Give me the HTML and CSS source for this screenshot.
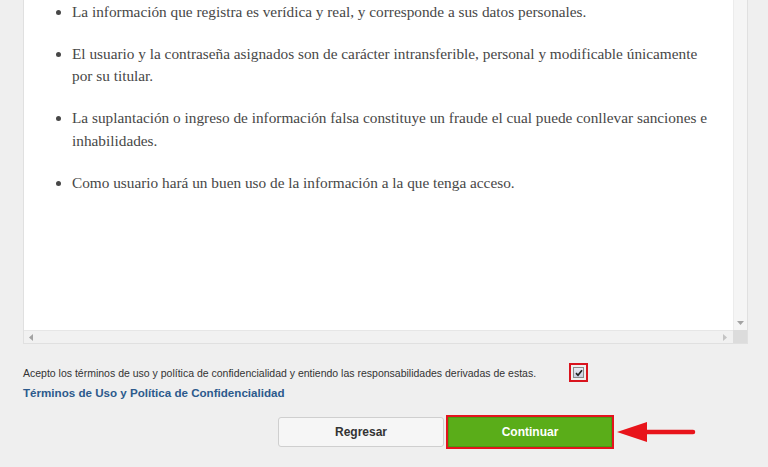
FILE: index.html
```html
<!DOCTYPE html>
<html lang="es">
<head>
<meta charset="utf-8">
<title>Términos de uso</title>
<link rel="stylesheet" href="styles.css">
</head>
<body>
<div class="page">
  <div class="terms-box">
    <div class="terms-content">
      <ul class="terms-list">
        <li>La información que registra es verídica y real, y corresponde a sus datos personales.</li>
        <li>El usuario y la contraseña asignados son de carácter intransferible, personal y modificable únicamente por su titular.</li>
        <li>La suplantación o ingreso de información falsa constituye un fraude el cual puede conllevar sanciones e inhabilidades.</li>
        <li>Como usuario hará un buen uso de la información a la que tenga acceso.</li>
      </ul>
    </div>
    <div class="vscroll">
      <svg class="arrow-down" width="7" height="4" viewBox="0 0 7 4"><path d="M0 0H7L3.5 4Z" fill="#a3a3a3"/></svg>
    </div>
    <div class="hscroll">
      <svg width="4" height="7" viewBox="0 0 4 7"><path d="M4 0V7L0 3.5Z" fill="#a3a3a3"/></svg>
      <svg width="4" height="7" viewBox="0 0 4 7"><path d="M0 0V7L4 3.5Z" fill="#c4c4c4"/></svg>
    </div>
    <div class="corner"></div>
  </div>

  <div class="agree-row">
    <span class="agree-text">Acepto los términos de uso y política de confidencialidad y entiendo las responsabilidades derivadas de estas.</span>
    <span class="check-highlight">
      <span class="checkbox">
        <svg width="8" height="8" viewBox="0 0 8 8"><path d="M1 4.2L3 6.3L7 1.2" fill="none" stroke="#222" stroke-width="1.7"/></svg>
      </span>
    </span>
  </div>

  <a class="terms-link" href="#">Términos de Uso y Política de Confidencialidad</a>

  <div class="actions">
    <button class="btn btn-back" type="button">Regresar</button>
    <button class="btn btn-continue" type="button">Continuar</button>
    <svg class="pointer-arrow" width="80" height="22" viewBox="0 0 80 22">
      <path d="M0 11L30 1V21Z" fill="#e8141b"/>
      <line x1="26" y1="11" x2="76" y2="11" stroke="#e8141b" stroke-width="4.5" stroke-linecap="round"/>
    </svg>
  </div>
</div>
</body>
</html>
```

FILE: styles.css
```css
html, body {
  margin: 0;
  padding: 0;
  background: #efefef;
}

.page {
  width: 768px;
  height: 467px;
  overflow: hidden;
  padding: 0 20px 0 23px;
  box-sizing: border-box;
  font-family: "Liberation Sans", Arial, sans-serif;
}

.terms-box {
  width: 725px;
  height: 344px;
  box-sizing: border-box;
  background: #fff;
  border: 1px solid #e0e0e0;
  border-top: none;
  display: grid;
  grid-template-columns: 1fr 14px;
  grid-template-rows: 1fr 13px;
}

.terms-content {
  overflow: hidden;
  padding: 1px 0 0 8px;
}

.terms-list {
  margin: 0;
  padding-left: 40px;
  max-width: 642px;
  font-family: "Liberation Serif", Georgia, serif;
  font-size: 15.3px;
  line-height: 22.7px;
  color: #474747;
}

.terms-list li {
  margin-bottom: 19px;
}

.vscroll {
  background: #f5f5f5;
  border-left: 1px solid #ececec;
  display: flex;
  align-items: flex-end;
  justify-content: center;
  padding-bottom: 5px;
}

.hscroll {
  background: #f1f1f1;
  border-top: 1px solid #e6e6e6;
  display: flex;
  align-items: center;
  justify-content: space-between;
  padding: 0 6px 0 5px;
}

.corner {
  background: #dcdcdc;
}

.agree-row {
  display: flex;
  align-items: center;
  margin-top: 18px;
  height: 21px;
}

.agree-text {
  font-size: 10.5px;
  color: #333;
}

.check-highlight {
  margin-left: 33px;
  width: 15px;
  height: 15px;
  border: 2px solid #d9141e;
  display: flex;
  align-items: center;
  justify-content: center;
}

.checkbox {
  width: 11px;
  height: 11px;
  box-sizing: border-box;
  border: 1px solid #8a8a8a;
  background: linear-gradient(#e9ebf3, #c9cde0);
  display: flex;
  align-items: center;
  justify-content: center;
}

.terms-link {
  display: block;
  margin-top: 3px;
  font-size: 11.6px;
  font-weight: bold;
  color: #2c5a8c;
  text-decoration: none;
}

.actions {
  display: flex;
  align-items: center;
  margin-top: 18px;
  padding-left: 255px;
}

.btn {
  font-family: "Liberation Sans", Arial, sans-serif;
  font-size: 12px;
  font-weight: bold;
  height: 30px;
  border-radius: 3px;
  cursor: pointer;
}

.btn-back {
  width: 166px;
  background: #f6f6f6;
  border: 1px solid #cfcfcf;
  color: #333;
}

.btn-continue {
  width: 164px;
  margin-left: 4px;
  background: #5aad19;
  border: 1px solid #4c9a12;
  color: #fff;
  outline: 2px solid #e3141d;
  outline-offset: 0;
  border-radius: 0;
}

.pointer-arrow {
  margin-left: 5px;
  display: block;
}
```
